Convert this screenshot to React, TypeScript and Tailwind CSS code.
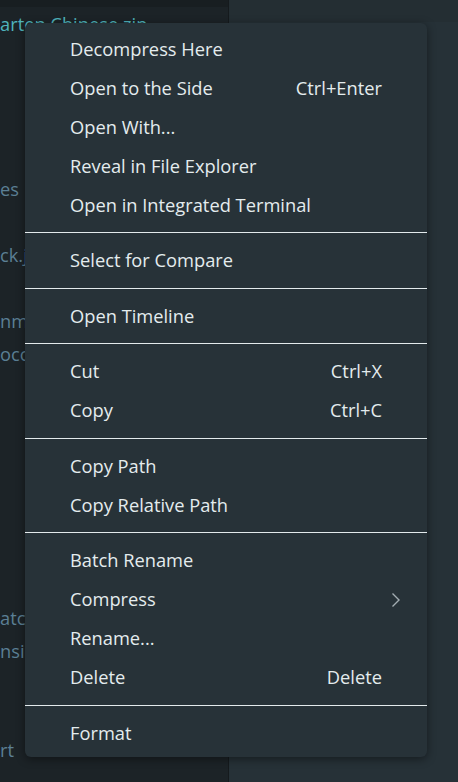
import React from 'react';

type Entry =
  | { kind: 'item'; label: string; shortcut?: string; submenu?: boolean }
  | { kind: 'sep'; tall?: boolean };

const menu: Entry[] = [
  { kind: 'item', label: 'Decompress Here' },
  { kind: 'item', label: 'Open to the Side', shortcut: 'Ctrl+Enter' },
  { kind: 'item', label: 'Open With...' },
  { kind: 'item', label: 'Reveal in File Explorer' },
  { kind: 'item', label: 'Open in Integrated Terminal' },
  { kind: 'sep' },
  { kind: 'item', label: 'Select for Compare' },
  { kind: 'sep', tall: true },
  { kind: 'item', label: 'Open Timeline' },
  { kind: 'sep' },
  { kind: 'item', label: 'Cut', shortcut: 'Ctrl+X' },
  { kind: 'item', label: 'Copy', shortcut: 'Ctrl+C' },
  { kind: 'sep', tall: true },
  { kind: 'item', label: 'Copy Path' },
  { kind: 'item', label: 'Copy Relative Path' },
  { kind: 'sep' },
  { kind: 'item', label: 'Batch Rename' },
  { kind: 'item', label: 'Compress', submenu: true },
  { kind: 'item', label: 'Rename...' },
  { kind: 'item', label: 'Delete', shortcut: 'Delete' },
  { kind: 'sep', tall: true },
  { kind: 'item', label: 'Format' },
];

// tails of explorer rows peeking out left of the menu (horizontally scrolled tree)
const treeRows: string[] = [
  '', '', '', '', '', 'es', '', 'ck.json', '', 'nmunity', 'occo',
  '', '', '', '', '', '', '', 'atch', 'nsions', '', '', 'rt',
];

const Chevron = () => (
  <svg width="10" height="16" viewBox="0 0 10 16" fill="none">
    <path d="M1.5 1.5 L8 8 L1.5 14.5" stroke="#a3adb2" strokeWidth="1.4" />
  </svg>
);

const ContextMenu = () => (
  <div className="absolute left-[25px] top-[23px] w-[402px] rounded-[6px] bg-[#273238] pt-[7px] pb-[4px] shadow-[0_2px_10px_rgba(0,0,0,0.45)]">
    {menu.map((e, i) =>
      e.kind === 'sep' ? (
        <div key={i} className={e.tall ? 'pt-[8px] pb-[8px]' : 'pt-[7px] pb-[8px]'}>
          <div className="h-px bg-[#e3eaec]" />
        </div>
      ) : (
        <div key={i} className="flex h-[39px] items-center pb-[2px] pl-[45px] text-[#e4ecee]">
          <span className="flex-1">{e.label}</span>
          {e.shortcut && <span>{e.shortcut}</span>}
          <span className="flex w-[45px] items-center pl-[9px] pt-[2px]">{e.submenu && <Chevron />}</span>
        </div>
      )
    )}
  </div>
);

const App: React.FC = () => {
  return (
    <div
      className="relative flex h-[782px] w-[458px] overflow-hidden text-[18.3px]"
      style={{ fontFamily: '"Open Sans", "Noto Sans", sans-serif' }}
    >
      {/* Explorer */}
      <div className="w-[229px] shrink-0 bg-[#1c2327] border-r border-[#151a1d]">
        <div className="h-[7px] bg-[#181e21]" />
        <div className="flex h-[33px] items-center whitespace-nowrap text-[#4fb4bd]">arten Chinese.zip</div>
        {treeRows.slice(1).map((t, i) => (
          <div key={i} className="flex h-[33px] items-center whitespace-nowrap text-[#5b7f94]">
            {t}
          </div>
        ))}
      </div>

      {/* Editor area */}
      <div className="flex-1 bg-[#263137]">
        <div className="h-[22px] bg-[#242e33]" />
      </div>

      <ContextMenu />
    </div>
  );
};

export default App;
